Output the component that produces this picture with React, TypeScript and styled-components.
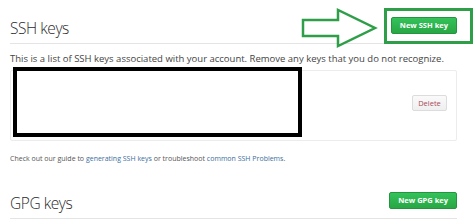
import React from "react";
import styled, { createGlobalStyle } from "styled-components";

const Global = createGlobalStyle`
  html, body { margin: 0; padding: 0; background: #fff; }
  body { font-family: "Open Sans", "Noto Sans", sans-serif; color: #333; }
`;

const Page = styled.div`
  position: relative;
  width: 474px;
  height: 220px;
  overflow: hidden;
  box-sizing: border-box;
  padding: 0 17px 0 10px;
`;

const SectionHeader = styled.div<{ $top: number }>`
  display: flex;
  justify-content: space-between;
  align-items: flex-start;
  padding-top: ${(p) => p.$top}px;
  padding-bottom: 7px;
  border-bottom: 1px solid #e4e4e4;
`;

const Title = styled.h2`
  margin: 0;
  padding-top: 3px;
  font-size: 15.5px;
  line-height: 16px;
  font-weight: 300;
  color: #2a2a2a;
  letter-spacing: -0.45px;
`;

const GreenButton = styled.button`
  box-sizing: border-box;
  height: 17px;
  padding: 0 8px;
  border: 1px solid #24943e;
  border-radius: 2px;
  background: linear-gradient(#34c25a, #28a745);
  color: #fff;
  font-family: inherit;
  font-size: 7.5px;
  font-weight: 700;
  line-height: 15px;
  white-space: nowrap;
`;

const Intro = styled.p`
  margin: 8px 0 0;
  font-size: 9.5px;
  line-height: 14px;
  color: #444;
  white-space: nowrap;
`;

const KeyBox = styled.div`
  box-sizing: border-box;
  display: flex;
  align-items: flex-start;
  height: 71px;
  margin-top: 4px;
  border: 1px solid #ececec;
  border-radius: 2px;
`;

const Redaction = styled.div`
  box-sizing: border-box;
  width: 289px;
  height: 70px;
  margin: -4px 0 0 2px;
  border: 4px solid #000;
  background: #fff;
`;

const DeleteButton = styled.button`
  box-sizing: border-box;
  margin: 24px 9px 0 auto;
  width: 35px;
  height: 16px;
  padding: 0;
  border: 1px solid #dcdcdc;
  border-radius: 2px;
  background: linear-gradient(#fafafa, #efefef);
  color: #a84a5a;
  font-family: inherit;
  font-size: 7.5px;
  line-height: 14px;
`;

const Guide = styled.p`
  margin: 12px 0 0;
  font-size: 7px;
  line-height: 12px;
  color: #555;
  white-space: nowrap;
`;

const Link = styled.a`
  color: #3c6e9c;
  text-decoration: none;
`;

const Annotation = styled.svg`
  position: absolute;
  left: 300px;
  top: 6px;
`;

export default function App() {
  return (
    <>
      <Global />
      <Page>
        <SectionHeader $top={17}>
          <Title>SSH keys</Title>
          <GreenButton>New SSH key</GreenButton>
        </SectionHeader>
        <Intro>
          This is a list of SSH keys associated with your account. Remove any keys that you do not recognize.
        </Intro>
        <KeyBox>
          <Redaction />
          <DeleteButton>Delete</DeleteButton>
        </KeyBox>
        <Guide>
          Check out our guide to <Link>generating SSH keys</Link> or troubleshoot{" "}
          <Link>common SSH Problems</Link>.
        </Guide>
        <SectionHeader $top={27}>
          <Title>GPG keys</Title>
          <GreenButton>New GPG key</GreenButton>
        </SectionHeader>
        <Annotation width="174" height="42" viewBox="0 0 174 42">
          <path
            d="M3 14 L38 14 L38 4 L75 22 L38 40 L38 30 L3 30 Z"
            fill="#fff"
            stroke="#2f9e48"
            strokeWidth="2.5"
            strokeLinejoin="miter"
          />
          <rect x="85.5" y="3.5" width="86" height="33" fill="none" stroke="#2f9e48" strokeWidth="3" />
        </Annotation>
      </Page>
    </>
  );
}
